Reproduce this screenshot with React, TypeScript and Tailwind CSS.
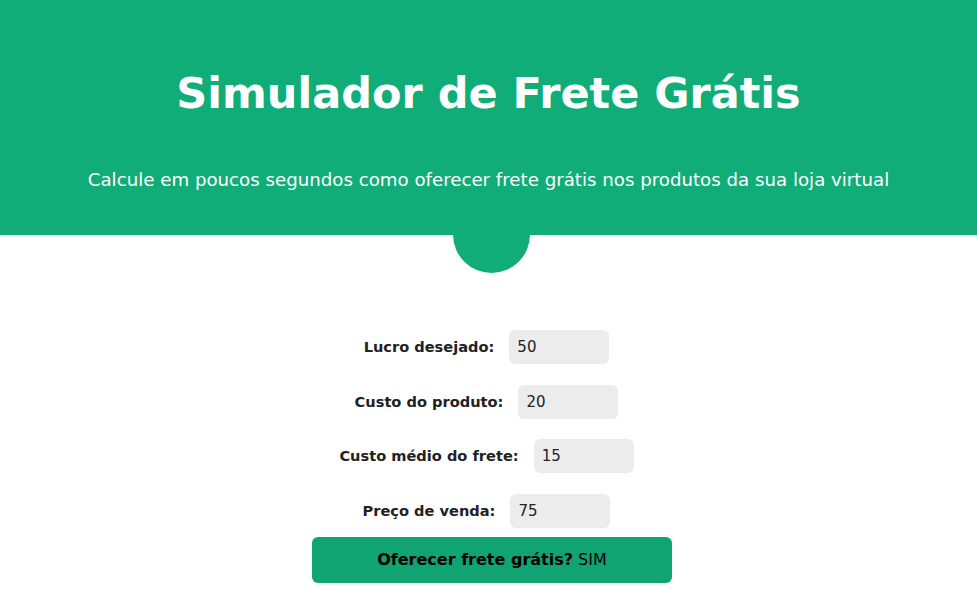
import { useState } from 'react';

const font = { fontFamily: '"DejaVu Sans", "Noto Sans", sans-serif' };

interface FieldProps {
  label: string;
  value: string;
  onChange: (v: string) => void;
}

function Field({ label, value, onChange }: FieldProps) {
  return (
    <label className="flex items-center justify-center gap-[15px]">
      <span className="text-[14.6px] font-bold text-[#222]">{label}</span>
      <input
        value={value}
        onChange={(e) => onChange(e.target.value)}
        className="w-[100px] h-[34px] rounded-md bg-[#ececec] px-2 text-[15px] text-[#222] outline-none"
        style={font}
      />
    </label>
  );
}

export default function App() {
  const [lucro, setLucro] = useState('50');
  const [custo, setCusto] = useState('20');
  const [frete, setFrete] = useState('15');
  const [preco, setPreco] = useState('75');

  return (
    <div className="min-h-[600px] bg-white" style={font}>
      <header className="relative h-[235px] bg-[#10ad78] text-white text-center">
        <h1 className="pt-[63px] text-[43px] leading-[60px] font-bold">Simulador de Frete Grátis</h1>
        <p className="mt-[43px] text-[18.2px]">
          Calcule em poucos segundos como oferecer frete grátis nos produtos da sua loja virtual
        </p>
        {/* half circle hanging under the banner */}
        <div className="absolute left-1/2 top-[196px] -translate-x-[36px] w-[77px] h-[77px] rounded-full bg-[#10ad78]" />
      </header>

      <main className="flex flex-col items-center pt-[95px]">
        <div className="flex flex-col gap-[20.5px] mr-[4px]">
          <Field label="Lucro desejado:" value={lucro} onChange={setLucro} />
          <Field label="Custo do produto:" value={custo} onChange={setCusto} />
          <Field label="Custo médio do frete:" value={frete} onChange={setFrete} />
          <Field label="Preço de venda:" value={preco} onChange={setPreco} />
        </div>
        <button className="mt-[9px] ml-[7px] w-[360px] h-[46px] rounded-md bg-[#0fa472] text-[16px] text-black">
          <span className="font-bold">Oferecer frete grátis?</span> SIM
        </button>
      </main>
    </div>
  );
}
